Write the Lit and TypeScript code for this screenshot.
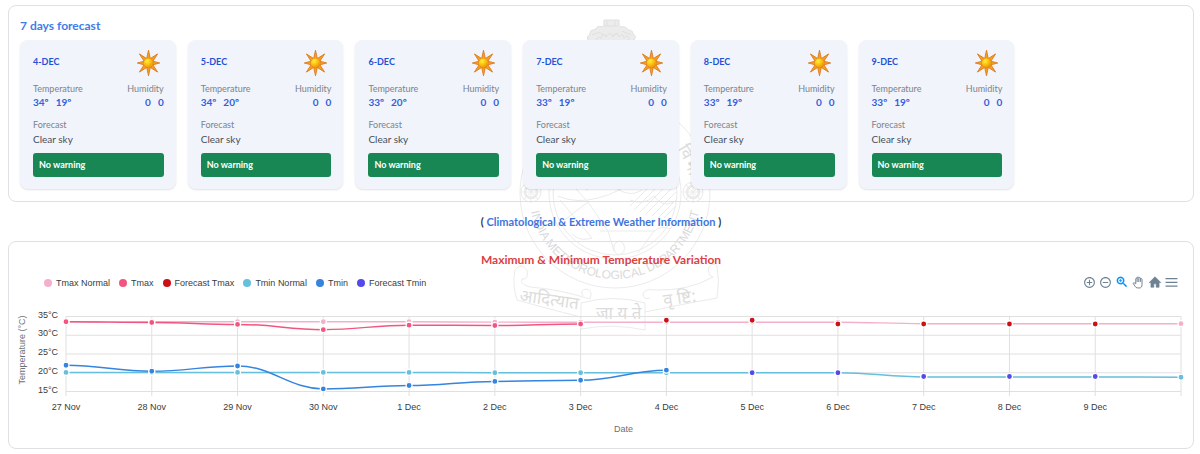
import { LitElement, html, svg, css } from "lit";
import { customElement, state } from "lit/decorators.js";

const DAYS = [
  { date: "4-DEC", max: 34, min: 19 },
  { date: "5-DEC", max: 34, min: 20 },
  { date: "6-DEC", max: 33, min: 20 },
  { date: "7-DEC", max: 33, min: 19 },
  { date: "8-DEC", max: 33, min: 19 },
  { date: "9-DEC", max: 33, min: 19 },
];

const LABELS = ["27 Nov", "28 Nov", "29 Nov", "30 Nov", "1 Dec", "2 Dec", "3 Dec", "4 Dec", "5 Dec", "6 Dec", "7 Dec", "8 Dec", "9 Dec", ""];

type Series = { name: string; color: string; line: boolean; data: (number | null)[] };

const n = null;
const SERIES: Series[] = [
  { name: "Tmax Normal", color: "#f4b0cb", line: true, data: [33.6, 33.6, 33.6, 33.6, 33.6, 33.5, 33.5, 33.5, 33.5, 33.5, 33.1, 33.1, 33.1, 33.1] },
  { name: "Tmax", color: "#f2557f", line: true, data: [33.6, 33.4, 32.9, 31.5, 32.7, 32.6, 33, n, n, n, n, n, n, n] },
  { name: "Forecast Tmax", color: "#cb1017", line: false, data: [n, n, n, n, n, n, n, 34, 34, 33, 33, 33, 33, n] },
  { name: "Tmin Normal", color: "#66bfdc", line: true, data: [20.1, 20.1, 20.1, 20.1, 20.1, 20, 20, 20, 20, 20, 18.9, 18.9, 18.9, 18.8] },
  { name: "Tmin", color: "#3584dd", line: true, data: [22, 20.4, 21.8, 15.7, 16.6, 17.7, 18, 20.7, n, n, n, n, n, n] },
  { name: "Forecast Tmin", color: "#5449ea", line: false, data: [n, n, n, n, n, n, n, n, 20, 20, 19, 19, 19, n] },
];

@customElement("forecast-card")
export class ForecastCard extends LitElement {
  static properties = { day: { attribute: false } };
  declare day: (typeof DAYS)[number];

  static styles = css`
    :host {
      display: block;
      background: #f1f4fa;
      border-radius: 8px;
      box-shadow: 0 1px 2px #0000001f;
      padding: 8px 12px 12px 13px;
    }
    .row { display: flex; justify-content: space-between; align-items: flex-start; }
    .date { font-size: 9px; font-weight: 700; color: #2351d8; margin: 0; line-height: 28px; }
    .sun { width: 28px; height: 30px; }
    .label { font-size: 9px; line-height: 14px; color: #7c838d; }
    .value { font-size: 10px; line-height: 13px; font-weight: 700; color: #3460dc; display: flex; gap: 7px; }
    .temps { margin-top: 4px; }
    .outlook { margin-top: 9px; }
    .sky { font-size: 10px; line-height: 14px; color: #474f59; }
    .warning {
      margin-top: 7px;
      background: #198754;
      color: #fff;
      border-radius: 3px;
      padding: 0 6px;
      font-size: 9px;
      font-weight: 700;
      line-height: 24px;
    }
  `;

  render() {
    const d = this.day;
    const ray = (len: number) => `M-1.9 -4 L0 ${-len} L1.9 -4 Z`;
    return html`
      <div class="row">
        <h3 class="date">${d.date}</h3>
        <svg class="sun" viewBox="-12.500 -14 28 28" role="img" aria-label="Sunny">
          <defs>
            <radialGradient id="disc" cx="0.35" cy="0.3" r="0.75">
              <stop offset="0" stop-color="#fff23a" />
              <stop offset="0.45" stop-color="#fdc414" />
              <stop offset="1" stop-color="#e88a10" />
            </radialGradient>
          </defs>
          ${[0, 45, 90, 135, 180, 225, 270, 315].map(
            (a) => svg`<path d=${ray(a % 180 === 90 ? 11.2 : 12.8)} transform="rotate(${a})" fill="#f8a01c" stroke="#dd7a22" stroke-width=".9" stroke-linejoin="round" />`
          )}
          <circle r="5" fill="url(#disc)" stroke="#e08a1d" stroke-width=".6" />
        </svg>
      </div>
      <div class="row temps"><span class="label">Temperature</span><span class="label">Humidity</span></div>
      <div class="row">
        <div class="value"><span>${d.max}º</span><span>${d.min}º</span></div>
        <div class="value"><span>0</span><span>0</span></div>
      </div>
      <div class="label outlook">Forecast</div>
      <div class="sky">Clear sky</div>
      <div class="warning">No warning</div>
    `;
  }
}

@customElement("temperature-chart")
export class TemperatureChart extends LitElement {
  @state() width = 1184;
  private observer?: ResizeObserver;

  static styles = css`
    :host { display: block; font-family: "Liberation Sans", Arial, sans-serif; }
    .head { display: flex; justify-content: space-between; align-items: center; height: 24px; padding: 0 15px 0 35px; }
    .legend { display: flex; gap: 9px; list-style: none; margin: 0; padding: 0; font-size: 9px; color: #373d3f; }
    .item { display: flex; align-items: center; gap: 4px; }
    .swatch { width: 8px; height: 8px; border-radius: 50%; }
    .tools { display: flex; align-items: center; gap: 3px; padding-bottom: 2px; }
    .tool { border: 0; background: none; padding: 0; display: flex; cursor: pointer; }
    .icon { width: 13px; height: 13px; }
    .wide { width: 14px; height: 14px; }
    .plot { display: block; width: 100%; height: 150px; }
    .tick { font-size: 9px; fill: #373d3f; }
    .axis { font-size: 9px; fill: #6b7177; }
  `;

  connectedCallback() {
    super.connectedCallback();
    this.observer = new ResizeObserver((entries) => {
      this.width = entries[0].contentRect.width;
    });
    this.observer.observe(this);
  }

  disconnectedCallback() {
    this.observer?.disconnect();
    super.disconnectedCallback();
  }

  private x(i: number) {
    const left = 57;
    return left + (i * (this.width - left - 12)) / (LABELS.length - 1);
  }

  private y(v: number) {
    return 21.5 + ((35 - v) * 75) / 20;
  }

  private curve(data: (number | null)[]) {
    const pts = data.flatMap((v, i) => (v === null ? [] : [[this.x(i), this.y(v)]]));
    return pts
      .map(([x, y], i) => {
        if (i === 0) return `M${x} ${y}`;
        const [px, py] = pts[i - 1];
        const h = (x - px) * 0.4;
        return `C${px + h} ${py} ${x - h} ${y} ${x} ${y}`;
      })
      .join("");
  }

  render() {
    const right = this.x(LABELS.length - 1);
    const tool = (name: string, body: unknown, size = "icon") => html`
      <button class="tool" type="button" aria-label=${name}><svg class=${size} viewBox="0 0 24 24" fill="#6e8192">${body}</svg></button>
    `;
    return html`
      <div class="head">
        <ul class="legend">
          ${SERIES.map((s) => html`<li class="item"><span class="swatch" style="background:${s.color}"></span>${s.name}</li>`)}
        </ul>
        <div class="tools">
          ${tool("Zoom in", svg`<path d="M13 7h-2v4H7v2h4v4h2v-4h4v-2h-4V7zm-1-5C6.480 2 2 6.480 2 12s4.480 10 10 10 10-4.480 10-10S17.520 2 12 2zm0 18c-4.410 0-8-3.590-8-8s3.590-8 8-8 8 3.590 8 8-3.590 8-8 8z" />`)}
          ${tool("Zoom out", svg`<path d="M7 11v2h10v-2H7zm5-9C6.480 2 2 6.480 2 12s4.480 10 10 10 10-4.480 10-10S17.520 2 12 2zm0 18c-4.410 0-8-3.590-8-8s3.590-8 8-8 8 3.590 8 8-3.590 8-8 8z" />`)}
          ${tool("Selection zoom", svg`<path fill="#008ffb" stroke="#008ffb" stroke-width=".5" d="M15.500 14h-.79l-.28-.27C15.410 12.590 16 11.110 16 9.500 16 5.910 13.090 3 9.500 3S3 5.910 3 9.500 5.910 16 9.500 16c1.610 0 3.090-.59 4.230-1.570l.27.28v.79l5 4.990L20.490 19l-4.990-5zm-6 0C7.010 14 5 11.990 5 9.500S7.010 5 9.500 5 14 7.010 14 9.500 11.990 14 9.500 14zM12 10h-2v2H9v-2H7V9h2V7h1v2h2v1z" />`, "wide")}
          ${tool("Panning", svg`<path fill="#fff" stroke="#6e8192" stroke-width="1.800" d="M10 22c-2 0-3-1-4-2.500L2 13.500c1.500-1.500 3-1 5 1V5c0-1.600 2.500-1.600 2.500 0V3c0-1.600 3-1.600 3 0v1c0-1.600 3-1.600 3 0v2c0-1.600 3-1.600 3 0v10c0 4-2 6-4 6zM9.500 5v6M12.500 4v7M15.500 5v6" />`)}
          ${tool("Reset zoom", svg`<path d="M10 21v-6h4v6h5v-8h3L12 3 2 13h3v8z" stroke="#6e8192" />`, "wide")}
          ${tool("Menu", svg`<path d="M1 20h22v-2.500H1zm0-7h22v-2.500H1zM1 3.500V6h22V3.500z" />`)}
        </div>
      </div>
      <svg class="plot" role="img" aria-label="Maximum and minimum temperature by date">
        ${[35, 30, 25, 20, 15].map(
          (v) => svg`
            <line x1=${this.x(0)} x2=${right} y1=${this.y(v)} y2=${this.y(v)} stroke="#e0e0e0" />
            <text class="tick" x="49" y=${this.y(v) + 1} text-anchor="end">${v}°C</text>`
        )}
        ${LABELS.map(
          (l, i) => svg`
            <line x1=${this.x(i)} x2=${this.x(i)} y1="21" y2="101" stroke="#e0e0e0" />
            <text class="tick" x=${this.x(i)} y="115" text-anchor="middle">${l}</text>`
        )}
        ${SERIES.filter((s) => s.line).map(
          (s) => svg`<path d=${this.curve(s.data)} fill="none" stroke=${s.color} stroke-width="1.500" />`
        )}
        ${SERIES.map((s) =>
          s.data.map((v, i) =>
            v === null ? "" : svg`<circle cx=${this.x(i)} cy=${this.y(v)} r="3" fill=${s.color} stroke="#fff" stroke-width="1.200" />`
          )
        )}
        <text class="axis" x=${(this.x(0) + right) / 2} y="137" text-anchor="middle">Date</text>
        <text class="axis" transform="translate(16 55) rotate(-90)" text-anchor="middle">Temperature (°C)</text>
      </svg>
    `;
  }
}

@customElement("app-root")
export class AppRoot extends LitElement {
  static styles = css`
    :host {
      display: block;
      position: relative;
      padding: 5px 6px 5px 8px;
      font-family: Lato, "Noto Sans", sans-serif;
      background: #fff;
    }
    .emblem { position: absolute; top: 16px; left: calc(50% - 90px); width: 210px; height: 320px; }
    .motto { font: 17px "Noto Sans Devanagari", "Noto Sans", sans-serif; fill: #dcdcdc; stroke: none; }
    .ring { font: 12px "Liberation Sans Narrow", "Liberation Sans", sans-serif; fill: #dadada; stroke: none; }
    .content { position: relative; }
    .panel { border: 1px solid #dee0e4; border-radius: 8px; }
    .forecast { padding: 12px 11px; }
    .title { margin: 0; font-size: 12px; line-height: 16px; font-weight: 700; color: #3f7ce8; }
    .cards { display: grid; grid-template-columns: repeat(7, 1fr); gap: 12px; margin-top: 6px; }
    .more { margin: 0; text-align: center; font-size: 11px; font-weight: 700; line-height: 39px; color: #333; }
    .link { color: #3f74dc; text-decoration: none; }
    .variation { padding: 10px 0 3px; }
    .heading { margin: 0 0 3px; text-align: center; font-size: 12px; line-height: 16px; font-weight: 700; color: #dc4145; }
  `;

  private emblem() {
    return html`
      <svg class="emblem" viewBox="510 16 210 320" aria-hidden="true" fill="none" stroke="#ebebeb">
        <defs>
          <path id="lower" d="M529 193 A86 86 0 0 0 701 193" />
          <path id="upper" d="M539 193 A76 76 0 0 1 691 193" />
        </defs>
        <path fill="#ececec" stroke="#e0e0e0" d="M588 40q-2-4 2-6q0-5 5-4q2-5 7-3l2-2v-5h15v5l2 2q5-1 7 3q5 0 5 4q4 2 1 6M596 40q2-5 5-1q1-8 5-2q4-7 7 0q4-7 6 0q4-5 5 1q4-5 5 2M604 26h14M607 21v5M615 21v5M592 35l8-3M631 35l-9-4M600 33l6 3M618 33l-6 3" />
        <circle cx="615" cy="193" r="95" />
        <circle cx="615" cy="193" r="66" />
        <circle cx="615" cy="193" r="62" />
        ${[531, 693].map(
          (cx) => svg`
            <circle cx=${cx} cy="192" r="10" />
            <circle cx=${cx} cy="192" r="6" stroke-width="2.500" />
            <path d="M${cx - 10} 192h20M${cx} 182v20M${cx - 7} 185l14 14M${cx + 7} 185l-14 14" />`
        )}
        <path d="M558 196q18 8 40 2t32-16M566 178l22 24l-26 20M588 202l20 29l6 20M560 200l32 38M592 238q-12 4-20-4M630 200q14 6 24-4q8 12 20 6M600 231h54q8-6 16-2M614 245q6-8 10 0q2 8-5 10q-6-2-5-10M654 231l-16 22M586 190q14-10 30-2q14 10 26 2" />
        <path d="M640 212l34-34M646 214l30-30M652 216l24-24M634 210l36-36M630 206l32-32M658 218l18-18M664 218l12-12" />
        <text class="ring" text-anchor="middle"><textPath href="#lower" startOffset="50%">INDIA METEOROLOGICAL DEPARTMENT</textPath></text>
        <text class="motto"><textPath href="#upper" startOffset="97%" text-anchor="end">विभाग</textPath></text>
        <path d="M517 300q-5-16-2-30q6-8 12 0q2 10-5 9q-3 5 8 8q28 2 60 12q3-8-3-10q-8 1-4 7M517 300q28 8 64 17M581 303v26q32-6 64 1v-27q-32-9-64 0M645 312q38-8 72-14q3-16 0-32q-4-4-8 1q-2 8 4 10q-24 14-58 13q-10-2-12 4q0 6 7 4" />
        <text class="motto" transform="translate(519 301) rotate(8)">आदित्यात</text>
        <text class="motto" x="596" y="319">जा य ते</text>
        <text class="motto" transform="translate(664 306) rotate(-8)">वृ ष्टि:</text>
      </svg>
    `;
  }

  render() {
    return html`
      ${this.emblem()}
      <div class="content">
        <section class="panel forecast">
          <h2 class="title">7 days forecast</h2>
          <div class="cards">${DAYS.map((d) => html`<forecast-card .day=${d}></forecast-card>`)}</div>
        </section>
        <p class="more">( <a class="link" href="#climatology">Climatological &amp; Extreme Weather Information</a> )</p>
        <section class="panel variation">
          <h2 class="heading">Maximum &amp; Minimum Temperature Variation</h2>
          <temperature-chart></temperature-chart>
        </section>
      </div>
    `;
  }
}
